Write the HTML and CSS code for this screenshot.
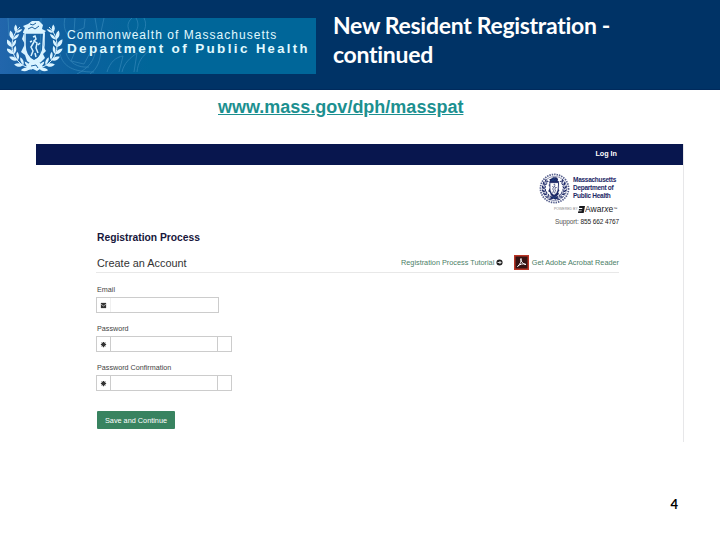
FILE: index.html
```html
<!DOCTYPE html>
<html lang="en">
<head>
    <meta charset="UTF-8">
    <meta name="viewport" content="width=device-width, initial-scale=1.0">
    <title>New Resident Registration</title>
    <link rel="stylesheet" href="styles.css">
</head>
<body>
    <!-- Shared state seal -->
    <svg class="defs" width="0" height="0" aria-hidden="true">
        <defs>
            <path id="leaf" d="M0 0C-4 -1 -5.500 -4 -5 -8C-1.500 -6.500 0 -4 0 0C.5 -4 2 -6 4.500 -7C4.500 -3.500 3 -1 0 0Z"/>
            <g id="branch">
                <path d="M25 50C12 47 5 37 5 27C5 19 8 13 13 8" fill="none" stroke="currentColor" stroke-width="1"/>
                <use href="#leaf" transform="translate(23 49) rotate(-72)"/>
                <use href="#leaf" transform="translate(16.500 46) rotate(-55)"/>
                <use href="#leaf" transform="translate(11 41) rotate(-38)"/>
                <use href="#leaf" transform="translate(7 35) rotate(-22)"/>
                <use href="#leaf" transform="translate(5 28) rotate(-3)"/>
                <use href="#leaf" transform="translate(6 20.500) rotate(15)"/>
                <use href="#leaf" transform="translate(9 13.500) rotate(30) scale(.85)"/>
            </g>
            <symbol id="seal" viewBox="0 0 56 54">
                <g fill="currentColor">
                    <use href="#branch"/>
                    <use href="#branch" transform="translate(55 0) scale(-1 1)"/>
                    <path d="M16 13L18 9L16 7L21 5L25 2L32 2L36 6L35 10L39 12L37 14L16 14Z"/>
                    <path d="M17 14L15 20L18 25L14 33L18 36L20 42L27 47L34 43L38 39L36 35L39 32L36 27L38 14L36 14L35 31L32 38L27 42L21 37L18 30Z"/>
                    <path d="M22 44L33 44L36 48L30 52L26 50L21 51L19 47Z"/>
                </g>
                <path class="shield" d="M18 14H37V26C37 34 33 39 27 42C21 39 18 34 18 26Z" stroke="currentColor" stroke-width="1.500"/>
                <path d="M26 18L28 17L29 20L27 22L30 24L29 29L31 34M27 23L24 28L26 32L24 37M23 23L25 22M31 26L33 24M28 34L29 38" fill="none" stroke="currentColor" stroke-width="1.500"/>
                <path class="cut" d="M21 10L25 8L28 10L32 7M23 5L26 6L29 4M24 47L29 46L31 49" fill="none" stroke-width="1"/>
            </symbol>
        </defs>
    </svg>

    <header class="slide-header">
        <div class="banner">
            <svg class="banner-art" viewBox="0 0 150 56" fill="none" stroke="#3f8fc0" stroke-width=".8" aria-hidden="true">
                <path d="M8 0L9 18M41 0L40 56M65 0C63 8 65 14 69 18M75 0L74 14L84 10L85 1M95 0L98 17M104 0L101 14"/>
                <path d="M60 36C63 49 74 54 94 54M66 35C69 45 78 50 89 49M96 28C95 44 88 50 77 56M101 29C101 43 97 51 90 56M77 29L71 43L84 46L90 35"/>
                <path d="M132 0C126 5 127 12 133 17C139 11 139 5 136 0M144 0C148 8 144 15 138 20M107 54C110 44 116 39 123 38L119 54M122 54C124 45 130 40 137 35L134 54M137 54C138 44 142 38 149 33"/>
            </svg>
            <svg class="banner-seal"><use href="#seal"/></svg>
            <div class="banner-text">
                <span class="banner-state">Commonwealth of Massachusetts</span>
                <span class="banner-dept">Department of Public <small>Health</small></span>
            </div>
        </div>
        <h1>New Resident Registration -<br>continued</h1>
    </header>

    <main>
        <a class="site-link" href="#">www.mass.gov/dph/masspat</a>

        <section class="panel">
            <nav class="panel-nav"><a href="#">Log In</a></nav>
            <div class="panel-body">
                <div class="brand">
                    <div class="brand-main">
                        <svg class="brand-seal" viewBox="0 0 32 32">
                            <circle cx="16" cy="16" r="14.500" fill="none" stroke="currentColor" stroke-width="1.800" stroke-dasharray="1.500 1" opacity=".75"/>
                            <circle cx="16" cy="16" r="12.500" fill="none" stroke="currentColor" stroke-width=".5"/>
                            <use href="#seal" x="3" y="3" width="26" height="26"/>
                        </svg>
                        <div>Massachusetts<br>Department of<br>Public Health</div>
                    </div>
                    <div class="powered">
                        <span>POWERED BY</span>
                        <svg viewBox="0 0 8 8"><path d="M1.500 0H8L6.500 8H0L.3 6H4L4.300 5H.8L1.100 3.500H4.800L5 2.300H1.200Z" fill="#18181c"/></svg>
                        <b>Awar<em>x</em>e</b><sup>™</sup>
                    </div>
                    <p class="support">Support: <span>855 662 4767</span></p>
                </div>

                <h2>Registration Process</h2>
                <div class="account-head">
                    <h3>Create an Account</h3>
                    <a class="tutorial" href="#">Registration Process Tutorial
                        <svg viewBox="0 0 8 8"><circle cx="4" cy="4" r="3.500" fill="#222"/><path d="M1.800 4H5.500M4 2.300L5.700 4L4 5.700" fill="none" stroke="#fff" stroke-width="1"/></svg>
                    </a>
                    <a class="reader" href="#">
                        <svg viewBox="0 0 15 15"><path d="M0 0H15V15H0Z" fill="#b93425"/><path d="M1.500 1.500H13.500V13.500H1.500Z" fill="#351313"/><path d="M3.500 11.500C6 9.500 7.800 6 7 3.500C6 5 8.500 9 12 9.500C9 8.200 6 9 3.500 11.500Z" fill="none" stroke="#fff" stroke-width="1"/></svg>
                        Get Adobe Acrobat Reader
                    </a>
                </div>

                <form>
                    <label>Email</label>
                    <div class="field email">
                        <span class="icon"><svg viewBox="0 0 8 8"><path d="M1 1H7V7H1Z" fill="#333"/><path d="M1 2.500L4 4.500L7 2.500" fill="none" stroke="#ddd" stroke-width=".8"/></svg></span>
                        <span class="input"></span>
                    </div>
                    <label>Password</label>
                    <div class="field">
                        <span class="icon"><svg viewBox="0 0 8 8"><path d="M4 1V7M1 4H7M1.800 1.800L6.200 6.200M6.200 1.800L1.800 6.200" stroke="#333" stroke-width="1.300"/></svg></span>
                        <span class="input"></span>
                        <span class="addon"></span>
                    </div>
                    <label>Password Confirmation</label>
                    <div class="field">
                        <span class="icon"><svg viewBox="0 0 8 8"><path d="M4 1V7M1 4H7M1.800 1.800L6.200 6.200M6.200 1.800L1.800 6.200" stroke="#333" stroke-width="1.300"/></svg></span>
                        <span class="input"></span>
                        <span class="addon"></span>
                    </div>
                    <button type="button">Save and Continue</button>
                </form>
            </div>
        </section>
    </main>

    <footer>4</footer>
</body>
</html>
```

FILE: styles.css
```css
* {
    margin: 0;
    padding: 0;
    box-sizing: border-box;
}

body {
    width: 720px;
    height: 540px;
    overflow: hidden;
    background: #fff;
    font-family: "Liberation Sans", Arial, sans-serif;
}

svg {
    display: block;
    flex: none;
}

.defs {
    position: absolute;
}

.shield {
    fill: none;
}

/* Slide header */
.slide-header {
    display: flex;
    height: 90px;
    padding-top: 18px;
    background: #003366;
    border-bottom: 1px solid #002a5c;
}

.banner {
    position: relative;
    width: 316px;
    height: 56px;
    flex: none;
    display: flex;
    background: linear-gradient(90deg, #2266ac 0, #0d609e 70px, #006699 150px);
}

.banner-art {
    position: absolute;
    left: 0;
    top: 0;
    width: 150px;
    height: 56px;
    opacity: .7;
}

.banner-seal {
    position: relative;
    width: 56px;
    height: 54px;
    margin: 1px 0 0 7px;
    color: #d9f3ff;
}

.cut {
    stroke: #1d62a0;
}

.banner-text {
    position: relative;
    display: flex;
    flex-direction: column;
    padding: 10px 0 0 4px;
    color: #e0faff;
    white-space: nowrap;
}

.banner-state {
    font-size: 12px;
    line-height: 14px;
    letter-spacing: 1.04px;
}

.banner-dept {
    font-size: 13.5px;
    line-height: 14px;
    font-weight: bold;
    letter-spacing: 2.35px;
}

.banner-dept small {
    font-size: 13px;
}

h1 {
    margin: -7px 0 0 17px;
    color: #fff;
    font: bold 23px/29px Lato, sans-serif;
    letter-spacing: -.3px;
    white-space: nowrap;
}

.site-link {
    display: block;
    width: 246px;
    height: 54px;
    margin-left: 218px;
    padding-top: 7px;
    color: #1c9090;
    font-size: 18px;
    line-height: 20px;
    font-weight: bold;
    white-space: nowrap;
}

/* Registration page */
.panel {
    width: 648px;
    height: 298px;
    margin-left: 36px;
    border-right: 1px solid #e7e7e9;
}

.panel-nav {
    height: 21px;
    padding-right: 66px;
    background: #08164e;
    text-align: right;
    font-size: 7.2px;
    line-height: 19px;
    font-weight: bold;
}

.panel-nav a {
    color: #fff;
    text-decoration: none;
}

.panel-body {
    padding: 7px 64px 0 60px;
}

.brand {
    width: 80px;
    height: 57px;
    margin-left: auto;
    color: #1c2866;
}

.brand-main {
    display: flex;
    gap: 3px;
    height: 32px;
    align-items: center;
    font-size: 6.5px;
    line-height: 8px;
    font-weight: bold;
    white-space: nowrap;
    letter-spacing: -.28px;
}

.brand-seal {
    width: 31px;
    height: 31px;
}

.brand-seal .cut {
    stroke: #fff;
}

.powered {
    display: flex;
    align-items: center;
    height: 10px;
    padding-left: 15px;
    color: #18181c;
    white-space: nowrap;
}

.powered span {
    width: 24px;
    color: #888;
    font-size: 3.5px;
}

.powered svg {
    width: 7px;
    height: 7px;
}

.powered b {
    font-size: 8.5px;
    font-weight: normal;
    line-height: 10px;
}

.powered sup {
    font-size: 4px;
    line-height: 4px;
}

.support {
    padding-top: 3px;
    color: #555;
    font-size: 6.5px;
    line-height: 10px;
    letter-spacing: -.1px;
    text-align: right;
    white-space: nowrap;
}

.support span {
    color: #222;
}

h2 {
    height: 23px;
    padding: 3px 0 0 1px;
    color: #17173b;
    font-size: 10.3px;
    line-height: 12px;
    white-space: nowrap;
}

.account-head {
    display: flex;
    align-items: center;
    height: 21px;
    border-bottom: 1px solid #e8e8e8;
    font-size: 7.3px;
    white-space: nowrap;
}

h3 {
    width: 305px;
    padding: 1px 0 0 1px;
    color: #333;
    font-size: 10.9px;
    font-weight: normal;
}

.account-head a {
    display: flex;
    align-items: center;
    gap: 2px;
    color: #4b8067;
    text-decoration: none;
}

.account-head .tutorial {
    padding-top: 1px;
}

.tutorial svg {
    width: 7px;
    height: 7px;
}

.account-head .reader {
    margin-left: auto;
    gap: 3px;
    font-size: 7.3px;
}

.reader svg {
    width: 15px;
    height: 15px;
}

form {
    padding-top: 12px;
}

label {
    display: block;
    height: 12px;
    padding-left: 1px;
    color: #444;
    font-size: 7.2px;
    line-height: 10px;
}

.field {
    display: flex;
    width: 136px;
    height: 16px;
    margin-bottom: 11px;
    border: 1px solid #ccc;
}

.field.email {
    width: 123px;
}

.icon {
    width: 13px;
    display: flex;
    align-items: center;
    justify-content: center;
}

.icon svg {
    width: 7px;
    height: 7px;
}

.input {
    flex: 1;
    border-left: 1px solid #ccc;
}

.email .input {
    border-left-color: #f0f0f0;
}

.addon {
    width: 14px;
    border-left: 1px solid #ccc;
}

button {
    display: block;
    width: 78px;
    height: 18px;
    margin: 20px 0 0 1px;
    border: none;
    border-radius: 1px;
    background: #388360;
    color: #fff;
    font: 7.3px "Liberation Sans", Arial, sans-serif;
    white-space: nowrap;
}

footer {
    padding: 54px 42px 0 0;
    text-align: right;
    font: bold 13px/16px Lato, sans-serif;
}
```
